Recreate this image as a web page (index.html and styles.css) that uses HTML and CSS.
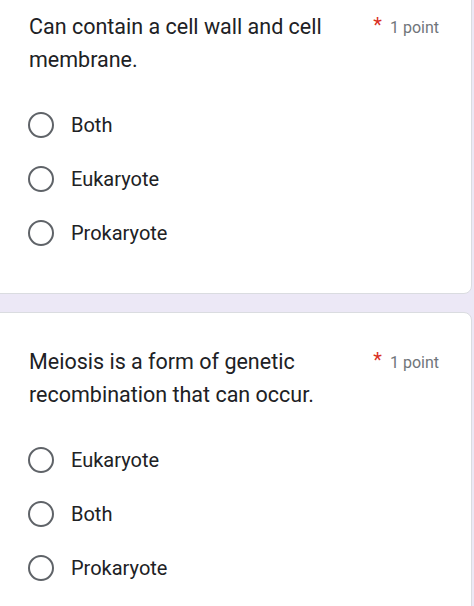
FILE: index.html
```html
<!DOCTYPE html>
<html>
<head>
<meta charset="utf-8">
<link rel="stylesheet" href="styles.css">
</head>
<body>
<div class="page">
  <div class="card card-first">
    <div class="q-head">
      <div class="q-text">Can contain a cell wall and cell membrane.</div>
      <div class="q-meta"><span class="req">*</span><span class="pts">1 point</span></div>
    </div>
    <div class="options">
      <div class="opt"><span class="radio"></span><span class="label">Both</span></div>
      <div class="opt"><span class="radio"></span><span class="label">Eukaryote</span></div>
      <div class="opt"><span class="radio"></span><span class="label">Prokaryote</span></div>
    </div>
  </div>
  <div class="card card-second">
    <div class="q-head">
      <div class="q-text">Meiosis is a form of genetic recombination that can occur.</div>
      <div class="q-meta"><span class="req">*</span><span class="pts">1 point</span></div>
    </div>
    <div class="options">
      <div class="opt"><span class="radio"></span><span class="label">Eukaryote</span></div>
      <div class="opt"><span class="radio"></span><span class="label">Both</span></div>
      <div class="opt"><span class="radio"></span><span class="label">Prokaryote</span></div>
    </div>
  </div>
</div>
</body>
</html>
```

FILE: styles.css
```css
html, body {
  margin: 0;
  padding: 0;
  background: #ece8f6;
  font-family: Roboto, "Liberation Sans", sans-serif;
  color: #202124;
  overflow: hidden;
}
.page {
  width: 474px;
  height: 606px;
  overflow: hidden;
  display: flex;
  flex-direction: column;
  gap: 18px;
}
.card {
  background: #fff;
  border: 1px solid #dadce0;
  border-radius: 8px;
  margin-left: -10px;
  width: 482px;
  box-sizing: border-box;
  padding: 31px 32px 33px 37px;
  flex-shrink: 0;
}
.card-first {
  margin-top: -22px;
}
.card-second {
  padding-top: 32px;
}
.q-head {
  display: flex;
  align-items: flex-start;
}
.q-text {
  flex: 1;
  margin-left: 1px;
  font-size: 21.5px;
  line-height: 33px;
  padding-right: 30px;
}
.q-meta {
  display: flex;
  align-items: flex-start;
  white-space: nowrap;
  padding-top: 3px;
}
.req {
  color: #d93025;
  font-size: 20px;
  line-height: 24px;
  margin-right: 8px;
}
.pts {
  color: #70757a;
  font-size: 16px;
  line-height: 24px;
  padding-top: 3px;
}
.options {
  margin-top: 22px;
  display: flex;
  flex-direction: column;
}
.opt {
  height: 54px;
  display: flex;
  align-items: center;
}
.radio {
  width: 22px;
  height: 22px;
  border: 2.5px solid #5f6368;
  border-radius: 50%;
  flex-shrink: 0;
}
.label {
  margin-left: 17px;
  font-size: 20px;
}
```
